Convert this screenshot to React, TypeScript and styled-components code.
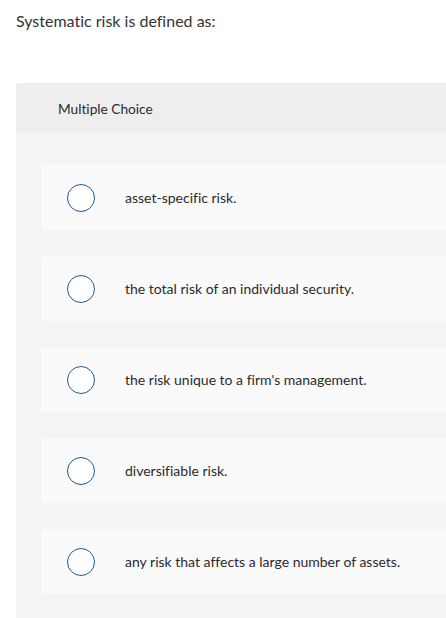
import React from "react";
import styled, { createGlobalStyle } from "styled-components";

const Global = createGlobalStyle`
  html, body { margin: 0; padding: 0; background: #ffffff; }
  body {
    font-family: Lato, "Liberation Sans", sans-serif;
    color: #333333;
    font-variant-ligatures: none;
  }
`;

const Page = styled.div`
  display: flex;
  flex-direction: column;
  width: 446px;
  overflow: hidden;
`;

const Question = styled.p`
  margin: 11px 16px 0 16px;
  font-size: 16px;
  line-height: 20px;
  color: #333333;
`;

const Panel = styled.section`
  margin: 52px 0 0 16px;
  background: #f4f4f4;
  border-top-left-radius: 3px;
`;

const Header = styled.div`
  height: 50px;
  display: flex;
  align-items: center;
  padding-left: 42px;
  background: #eeeeee;
  border-top-left-radius: 3px;
  font-size: 13.7px;
  color: #2b2b2b;
`;

const Options = styled.div`
  display: flex;
  flex-direction: column;
  gap: 26px;
  padding: 32px 0 32px 25px;
`;

const Option = styled.label`
  height: 65px;
  display: flex;
  align-items: center;
  gap: 30px;
  padding-left: 26px;
  background: #fafafa;
  border-radius: 4px 0 0 4px;
  font-size: 14px;
  color: #2b2b2b;
  cursor: pointer;
`;

const Radio = styled.span`
  width: 28px;
  height: 28px;
  box-sizing: border-box;
  border-radius: 50%;
  border: 1.5px solid #1d5a8c;
  background: #ffffff;
  flex-shrink: 0;
`;

const choices = [
  "asset-specific risk.",
  "the total risk of an individual security.",
  "the risk unique to a firm's management.",
  "diversifiable risk.",
  "any risk that affects a large number of assets.",
];

export default function App() {
  return (
    <Page>
      <Global />
      <Question>Systematic risk is defined as:</Question>
      <Panel>
        <Header>Multiple Choice</Header>
        <Options>
          {choices.map((c) => (
            <Option key={c}>
              <Radio />
              <span>{c}</span>
            </Option>
          ))}
        </Options>
      </Panel>
    </Page>
  );
}
